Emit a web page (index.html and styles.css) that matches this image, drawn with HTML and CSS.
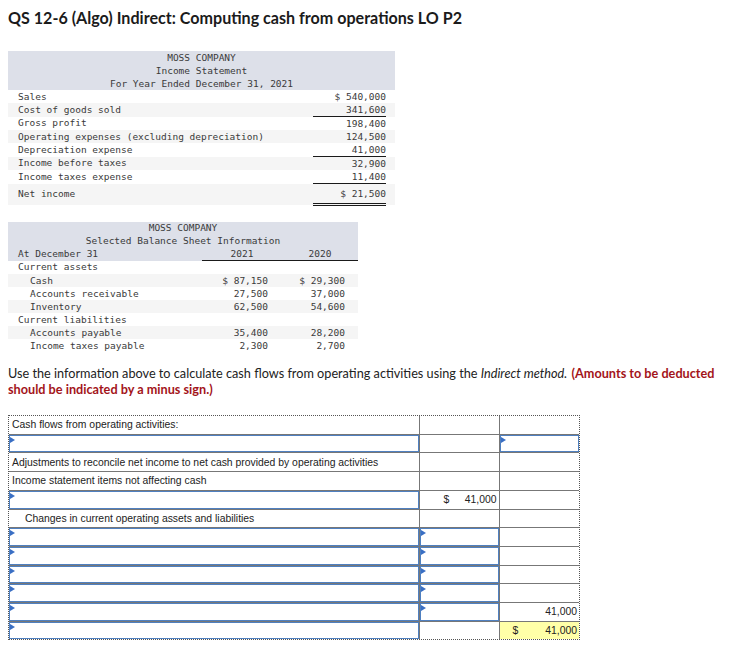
FILE: index.html
```html
<!DOCTYPE html>
<html>
<head>
<meta charset="utf-8">
<title>QS 12-6</title>
<link rel="stylesheet" href="styles.css">
</head>
<body>
<h1 class="title">QS 12-6 (Algo) Indirect: Computing cash from operations LO P2</h1>

<table class="fin income">
  <thead>
    <tr class="hd"><th colspan="3">MOSS COMPANY</th></tr>
    <tr class="hd"><th colspan="3">Income Statement</th></tr>
    <tr class="hd"><th colspan="3">For Year Ended December 31, 2021</th></tr>
  </thead>
  <tbody>
    <tr><td class="lbl">Sales</td><td class="num">$ 540,000</td><td class="pad"></td></tr>
    <tr class="alt"><td class="lbl">Cost of goods sold</td><td class="num ul">341,600</td><td class="pad"></td></tr>
    <tr><td class="lbl">Gross profit</td><td class="num">198,400</td><td class="pad"></td></tr>
    <tr class="alt"><td class="lbl">Operating expenses (excluding depreciation)</td><td class="num">124,500</td><td class="pad"></td></tr>
    <tr><td class="lbl">Depreciation expense</td><td class="num ul">41,000</td><td class="pad"></td></tr>
    <tr class="alt"><td class="lbl">Income before taxes</td><td class="num">32,900</td><td class="pad"></td></tr>
    <tr><td class="lbl">Income taxes expense</td><td class="num ul">11,400</td><td class="pad"></td></tr>
    <tr class="alt net"><td class="lbl">Net income</td><td class="num dbl">$ 21,500</td><td class="pad"></td></tr>
  </tbody>
</table>

<table class="fin balance">
  <thead>
    <tr class="hd"><th colspan="3">MOSS COMPANY</th></tr>
    <tr class="hd"><th colspan="3">Selected Balance Sheet Information</th></tr>
    <tr class="hd"><th class="lbl th-left">At December 31</th><th class="yr y1">2021</th><th class="yr y2">2020</th></tr>
  </thead>
  <tbody>
    <tr><td class="lbl">Current assets</td><td></td><td></td></tr>
    <tr class="alt"><td class="lbl ind">Cash</td><td class="bnum b1">$ 87,150</td><td class="bnum b2">$ 29,300</td></tr>
    <tr><td class="lbl ind">Accounts receivable</td><td class="bnum b1">27,500</td><td class="bnum b2">37,000</td></tr>
    <tr class="alt"><td class="lbl ind">Inventory</td><td class="bnum b1">62,500</td><td class="bnum b2">54,600</td></tr>
    <tr><td class="lbl">Current liabilities</td><td></td><td></td></tr>
    <tr class="alt"><td class="lbl ind">Accounts payable</td><td class="bnum b1">35,400</td><td class="bnum b2">28,200</td></tr>
    <tr><td class="lbl ind">Income taxes payable</td><td class="bnum b1">2,300</td><td class="bnum b2">2,700</td></tr>
  </tbody>
</table>

<p class="instr">Use the information above to calculate cash flows from operating activities using the <em>Indirect method.</em> <strong class="warn">(Amounts to be deducted</strong><br><strong class="warn">should be indicated by a minus sign.)</strong></p>

<div class="cf-wrap">
<table class="cf">
  <colgroup><col class="w1"><col class="w2"><col class="w3"></colgroup>
  <tr><td class="txt">Cash flows from operating activities:</td><td></td><td></td></tr>
  <tr><td><div class="inp"><span class="tri"></span></div></td><td></td><td><div class="inp"><span class="tri"></span></div></td></tr>
  <tr><td class="txt">Adjustments to reconcile net income to net cash provided by operating activities</td><td></td><td></td></tr>
  <tr><td class="txt">Income statement items not affecting cash</td><td></td><td></td></tr>
  <tr><td><div class="inp"><span class="tri"></span></div></td><td><div class="val v2"><span>$</span><span>41,000</span></div></td><td></td></tr>
  <tr><td class="txt sub">Changes in current operating assets and liabilities</td><td></td><td></td></tr>
  <tr><td><div class="inp"><span class="tri"></span></div></td><td><div class="inp"><span class="tri"></span></div></td><td></td></tr>
  <tr><td><div class="inp"><span class="tri"></span></div></td><td><div class="inp"><span class="tri"></span></div></td><td></td></tr>
  <tr><td><div class="inp"><span class="tri"></span></div></td><td><div class="inp"><span class="tri"></span></div></td><td></td></tr>
  <tr><td><div class="inp"><span class="tri"></span></div></td><td><div class="inp"><span class="tri"></span></div></td><td></td></tr>
  <tr><td><div class="inp"><span class="tri"></span></div></td><td><div class="inp"><span class="tri"></span></div></td><td class="sum"><div class="val v3"><span></span><span>41,000</span></div></td></tr>
  <tr><td><div class="inp"><span class="tri"></span></div></td><td class="topline"></td><td class="total topline"><div class="val v3"><span>$</span><span>41,000</span></div></td></tr>
</table>
</div>
</body>
</html>
```

FILE: styles.css
```css
body {
  margin: 8px;
  font-family: "Liberation Sans", Arial, sans-serif;
  color: #222;
  background: #fff;
}

.title {
  margin: 0 0 23px;
  font-family: Lato, "Open Sans", sans-serif;
  font-weight: 700;
  font-size: 16.1px;
  line-height: 20px;
  color: #1b1b1b;
}

.fin {
  border-collapse: collapse;
  font-family: "DejaVu Sans Mono", monospace;
  font-size: 9.5px;
  color: #3a3a3a;
}

.fin th {
  font-weight: normal;
  background: #dde0e9;
  padding: 0;
  height: 13px;
  line-height: 12px;
}

.fin td {
  padding: 0;
  height: 13px;
  line-height: 12px;
}

.fin .lbl {
  padding-left: 10px;
  text-align: left;
}

.fin .ind {
  padding-left: 22px;
}

.alt td {
  background: #f5f5f5;
}

.income {
  width: 387px;
  margin-bottom: 16px;
}

.income .num {
  text-align: right;
  width: 73px;
}

.income .pad {
  width: 9px;
}

.ul {
  border-bottom: 1px solid #1a1a1a;
}

.dbl {
  border-bottom: 3px double #1a1a1a;
}

.net td {
  height: 19px;
}

.balance {
  width: 350px;
}

.balance th {
  height: 12.7px;
}

.th-left {
  text-align: left;
}

.yr {
  border-bottom: 1px solid #1a1a1a;
  text-align: center;
}

.y1 {
  width: 80px;
}

.y2 {
  width: 76px;
}

.bnum {
  text-align: right;
}

.b1 {
  padding-right: 14px !important;
}

.b2 {
  padding-right: 13px !important;
}

.instr {
  margin: 13px 0 18px;
  font-family: Lato, "Open Sans", sans-serif;
  font-size: 12.7px;
  line-height: 16px;
  color: #222;
}

.instr em {
  font-style: italic;
  margin-right: 1px;
}

.warn {
  color: #a3141a;
  font-weight: 700;
}

.cf-wrap {
  display: inline-block;
  border: 1px dotted #555;
}

.cf {
  border-collapse: collapse;
  table-layout: fixed;
  font-family: "Liberation Sans", Arial, sans-serif;
  font-size: 10.4px;
  color: #222;
}

.w1 { width: 410px; }
.w2 { width: 80px; }
.w3 { width: 80px; }

.cf td {
  border: 1px solid #777;
  padding: 0;
  height: 17.7px;
  vertical-align: middle;
}

.cf tr:first-child td {
  border-top: none;
}

.cf td:first-child {
  border-left: none;
}

.cf td:last-child {
  border-right: none;
}

.cf tr:last-child td {
  border-bottom: none;
}

.cf .txt {
  padding-left: 3px;
  white-space: nowrap;
}

.cf .sub {
  padding-left: 16px;
}

.inp {
  box-sizing: border-box;
  height: 17.7px;
  border: 1px solid #4f80c0;
  background: #fff;
}

.tri {
  display: block;
  width: 0;
  height: 0;
  margin-top: 1px;
  border-left: 5px solid #3a6fc4;
  border-top: 3px solid transparent;
  border-bottom: 3px solid transparent;
}

.val {
  display: flex;
  justify-content: space-between;
  align-items: center;
}

.v2 {
  padding: 0 2px 0 24px;
}

.v3 {
  padding: 0 2px 0 13px;
}

.cf td.topline {
  border-top: 1px solid #000;
}

.cf td.total {
  background: #ffffa8;
  border-bottom: 2px solid #000;
}
```
